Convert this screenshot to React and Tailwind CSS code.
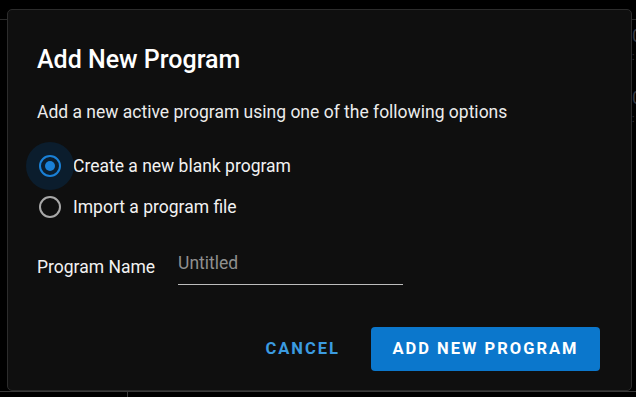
export default function App() {
  return (
    <div
      className="relative w-[636px] h-[397px] overflow-hidden bg-black"
      style={{ fontFamily: "Roboto, 'Liberation Sans', sans-serif" }}
    >
      {/* underlying page (behind modal) */}
      <div className="absolute left-0 top-[19px] w-full h-px bg-[#2a2a2a]" />
      <div className="absolute left-0 top-[391px] w-full h-px bg-[#3a3a3a]" />
      <div className="absolute left-[127px] top-[391px] w-px h-[10px] bg-[#3a3a3a]" />
      <div className="absolute left-[632px] top-[26px] flex flex-col text-[18px] leading-[20px] text-[#3a3a44]">
        <span>0</span>
        <span className="mt-[6px] text-[10px] leading-[10px]">:</span>
        <span className="mt-[26px]">0</span>
        <span className="mt-[6px] text-[10px] leading-[10px]">:</span>
      </div>

      {/* dialog */}
      <div className="absolute left-[7px] top-[9px] w-[625px] h-[382px] rounded-[5px] border border-[#2c2c2c] bg-[#0f0f0f] flex flex-col pl-[29px] pr-[31px] pt-[34px] pb-[19px]">
        <h2 className="text-[25px] leading-[32px] font-medium text-white">Add New Program</h2>
        <p className="mt-[24px] text-[17.5px] leading-[24px] text-[#ececec]">
          Add a new active program using one of the following options
        </p>

        <div className="mt-[22px] flex flex-col gap-[1px]">
          <label className="flex items-center h-[40px]">
            <span className="relative w-[24px] h-[24px] ml-[1px] flex items-center justify-center">
              <span className="absolute w-[48px] h-[48px] rounded-full bg-[#0b1d2d]" />
              <span className="relative w-[22px] h-[22px] rounded-full border-2 border-[#1a80d6] flex items-center justify-center">
                <span className="w-[10px] h-[10px] rounded-full bg-[#1a80d6]" />
              </span>
            </span>
            <span className="ml-[11px] text-[17.5px] text-[#f2f2f2]">Create a new blank program</span>
          </label>
          <label className="flex items-center h-[40px]">
            <span className="relative w-[24px] h-[24px] ml-[1px] flex items-center justify-center">
              <span className="w-[22px] h-[22px] rounded-full border-2 border-[#a8a8a8]" />
            </span>
            <span className="ml-[11px] text-[17.5px] text-[#f2f2f2]">Import a program file</span>
          </label>
        </div>

        <div className="mt-[20px] flex items-center h-[40px]">
          <span className="text-[17.5px] text-[#f2f2f2] mt-[1px]">Program Name</span>
          <div className="ml-[23px] w-[225px] border-b border-[#bdbdbd] h-[36px] flex items-end pb-[6px]">
            <span className="text-[17.5px] leading-[24px] text-[#8f8f8f] -translate-y-[3px]">Untitled</span>
          </div>
        </div>

        <div className="mt-auto flex items-center justify-end gap-[12px]">
          <button className="h-[44px] px-[19px] text-[16.5px] font-bold tracking-[2px] text-[#3b9be0] uppercase">
            Cancel
          </button>
          <button className="h-[44px] w-[229px] rounded-[4px] bg-[#0b77cc] text-[16.5px] font-bold tracking-[2px] text-white uppercase">
            Add New Program
          </button>
        </div>
      </div>
    </div>
  );
}
